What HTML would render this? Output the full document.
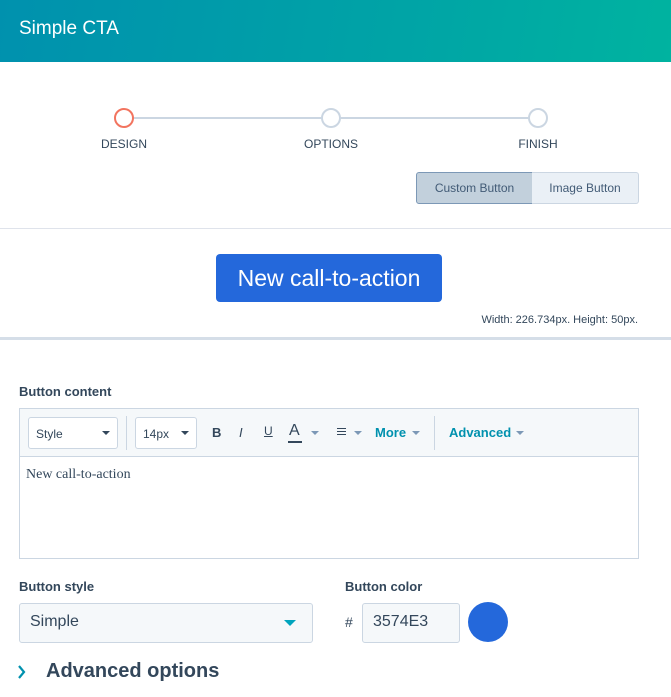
<!DOCTYPE html>
<html><head><style>
*{margin:0;padding:0;box-sizing:border-box}
body{width:671px;height:697px;background:#fff;font-family:"Liberation Sans",sans-serif;color:#33475b;position:relative;overflow:hidden}
.a{position:absolute}
.hdr{left:0;top:0;width:671px;height:62px;background:linear-gradient(100deg,#0091ae 0%,#00a4a6 60%,#00b3a0 100%)}
.lbl{font-size:12px;color:#33475b;transform:translateX(-50%)}
.circ{width:20px;height:20px;border-radius:50%;border:2px solid #cbd6e2;background:#fff}
.sel{border:1px solid #cbd6e2;border-radius:3px;background:#fff;font-size:12px;color:#33475b;padding:9px 7px}
.car{width:0;height:0;border-left:4px solid transparent;border-right:4px solid transparent;border-top:4px solid #33475b}
.car2{width:0;height:0;border-left:4px solid transparent;border-right:4px solid transparent;border-top:4px solid #7c98b6}
</style></head><body>
<div class="a hdr"></div>
<div class="a" style="left:19px;top:18px;font-size:19px;color:#fff">Simple CTA</div>

<div class="a" style="left:124px;top:117px;width:414px;height:2px;background:#cbd6e2"></div>
<div class="a circ" style="left:114px;top:108px;border-color:#f2745f"></div>
<div class="a circ" style="left:321px;top:108px"></div>
<div class="a circ" style="left:528px;top:108px"></div>
<div class="a lbl" style="left:124px;top:137px">DESIGN</div>
<div class="a lbl" style="left:331px;top:137px">OPTIONS</div>
<div class="a lbl" style="left:538px;top:137px">FINISH</div>

<div class="a" style="left:416px;top:172px;width:117px;height:32px;background:#c2d0dc;border:1px solid #7c98b6;border-radius:3px 0 0 3px;font-size:12px;color:#425b76;text-align:center;line-height:30px">Custom Button</div>
<div class="a" style="left:532px;top:172px;width:107px;height:32px;background:#eaf0f6;border:1px solid #cbd6e2;border-left:none;border-radius:0 3px 3px 0;font-size:12px;color:#425b76;text-align:center;line-height:30px">Image Button</div>

<div class="a" style="left:0;top:228px;width:671px;height:1px;background:#dfe3eb"></div>

<div class="a" style="left:216px;top:254px;width:226px;height:48px;background:#2468db;border-radius:4px;color:#fff;font-size:23px;text-align:center;line-height:48px">New call-to-action</div>
<div class="a" style="right:33px;top:314px;font-size:11px;color:#33475b">Width: 226.734px. Height: 50px.</div>
<div class="a" style="left:0;top:337px;width:671px;height:3px;background:#d5dee8"></div>

<div class="a" style="left:19px;top:384px;font-size:13px;font-weight:bold;color:#33475b">Button content</div>
<div class="a" style="left:19px;top:408px;width:620px;height:151px;border:1px solid #cbd6e2;background:#fff"></div>
<div class="a" style="left:20px;top:409px;width:618px;height:48px;background:#f5f8fa;border-bottom:1px solid #cbd6e2"></div>
<div class="a sel" style="left:28px;top:417px;width:90px;height:32px">Style</div>
<div class="a car" style="left:102px;top:431px"></div>
<div class="a" style="left:126px;top:416px;width:1px;height:34px;background:#cbd6e2"></div>
<div class="a sel" style="left:135px;top:417px;width:62px;height:32px">14px</div>
<div class="a car" style="left:181px;top:431px"></div>
<div class="a" style="left:212px;top:425px;font-size:13px;font-weight:bold">B</div>
<div class="a" style="left:239px;top:425px;font-size:13px;font-style:italic">I</div>
<div class="a" style="left:264px;top:424px;font-size:12px;text-decoration:underline">U</div>
<div class="a" style="left:289px;top:422px;font-size:16px">A</div>
<div class="a" style="left:288px;top:441px;width:14px;height:2px;background:#33475b"></div>
<div class="a car2" style="left:311px;top:431px"></div>
<div class="a" style="left:337px;top:428px;width:9px;height:1px;background:#33475b;box-shadow:0 3px 0 #33475b,0 6px 0 #33475b"></div>
<div class="a" style="left:337px;top:434px;width:6px;height:1px;background:#33475b"></div>
<div class="a car2" style="left:354px;top:431px"></div>
<div class="a" style="left:375px;top:425px;font-size:13px;font-weight:bold;color:#0091ae">More</div>
<div class="a car2" style="left:412px;top:431px"></div>
<div class="a" style="left:434px;top:416px;width:1px;height:34px;background:#cbd6e2"></div>
<div class="a" style="left:449px;top:425px;font-size:13px;font-weight:bold;color:#0091ae">Advanced</div>
<div class="a car2" style="left:516px;top:431px"></div>
<div class="a" style="left:26px;top:467px;font-family:'Liberation Serif',serif;font-size:14px;color:#33475b">New call-to-action</div>

<div class="a" style="left:19px;top:579px;font-size:13px;font-weight:bold">Button style</div>
<div class="a" style="left:345px;top:579px;font-size:13px;font-weight:bold">Button color</div>
<div class="a" style="left:19px;top:603px;width:294px;height:40px;background:#f5f8fa;border:1px solid #cbd6e2;border-radius:3px"></div>
<div class="a" style="left:30px;top:613px;font-size:16px">Simple</div>
<div class="a" style="left:284px;top:620px;width:0;height:0;border-left:6px solid transparent;border-right:6px solid transparent;border-top:6px solid #00a4bd"></div>
<div class="a" style="left:345px;top:614px;font-size:14px">#</div>
<div class="a" style="left:362px;top:603px;width:98px;height:40px;background:#f5f8fa;border:1px solid #cbd6e2;border-radius:3px"></div>
<div class="a" style="left:373px;top:613px;font-size:16px">3574E3</div>
<div class="a" style="left:468px;top:602px;width:40px;height:40px;border-radius:50%;background:#2468db"></div>

<svg class="a" style="left:17px;top:664px" width="10" height="16"><path d="M2 2 L7 8 L2 14" stroke="#0091ae" stroke-width="2.2" fill="none"/></svg>
<div class="a" style="left:46px;top:660px;font-size:20px;font-weight:bold;color:#33475b">Advanced options</div>
</body></html>
